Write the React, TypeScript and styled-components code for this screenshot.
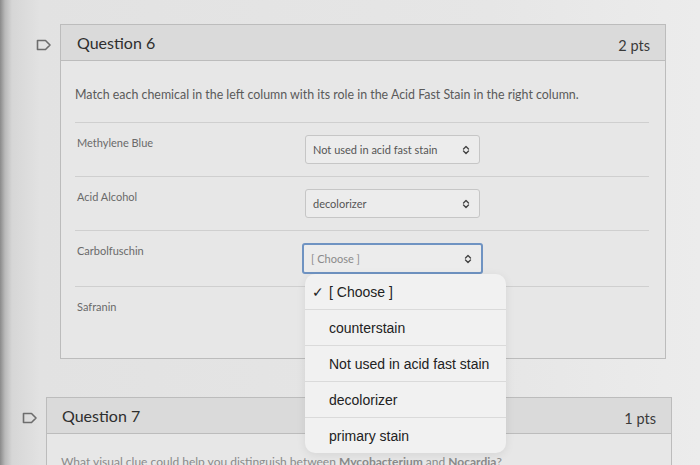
import styled, { createGlobalStyle } from 'styled-components';

const GlobalStyle = createGlobalStyle`
  html, body {
    margin: 0;
    padding: 0;
  }
  body {
    width: 700px;
    height: 465px;
    overflow: hidden;
    font-family: Lato, "Liberation Sans", sans-serif;
    background: linear-gradient(90deg, #8a8a8a 0, #b9b9b9 5px, #d6d6d6 12px, #e2e2e2 40px, #e6e6e6 70%, #ececec 100%);
  }
`;

interface Row {
  chemical: string;
  value: string;
  focused?: boolean;
  empty?: boolean;
}

const rows: Row[] = [
  { chemical: 'Methylene Blue', value: 'Not used in acid fast stain' },
  { chemical: 'Acid Alcohol', value: 'decolorizer' },
  { chemical: 'Carbolfuschin', value: '[ Choose ]', focused: true, empty: true },
  { chemical: 'Safranin', value: '' },
];

const options = ['[ Choose ]', 'counterstain', 'Not used in acid fast stain', 'decolorizer', 'primary stain'];

const Flag = () => (
  <svg width="16" height="12" viewBox="0 0 16 12">
    <path d="M1.5 1.5 H9.5 L14 6 L9.5 10.5 H1.5 Z" fill="none" stroke="#6d6d6d" strokeWidth="1.6" strokeLinejoin="round" />
  </svg>
);

const Arrows = () => (
  <svg width="8" height="10" viewBox="0 0 8 10">
    <path d="M1.5 4 L4 1.5 L6.5 4 M1.5 6 L4 8.5 L6.5 6" fill="none" stroke="#444" strokeWidth="1.4" strokeLinecap="round" strokeLinejoin="round" />
  </svg>
);

const App = () => {
  return (
    <>
      <GlobalStyle />
      <Page>
        <Question $left={36} $right={34}>
          <FlagCol><Flag /></FlagCol>
          <Card>
            <Header>
              <Title>Question 6</Title>
              <Points>2 pts</Points>
            </Header>
            <Body>
              <Prompt>Match each chemical in the left column with its role in the Acid Fast Stain in the right column.</Prompt>
              {rows.map((r, i) => (
                <MatchRow key={r.chemical} $last={i === rows.length - 1}>
                  <Chemical>{r.chemical}</Chemical>
                  <SelectWrap>
                    <Select $focused={r.focused} $empty={r.empty}>
                      <span>{r.value}</span>
                      <Arrows />
                    </Select>
                    {r.focused && (
                      <Menu>
                        {options.map((o, j) => (
                          <MenuItem key={o} $first={j === 0}>
                            {j === 0 && <Check>✓</Check>}
                            {o}
                          </MenuItem>
                        ))}
                      </Menu>
                    )}
                  </SelectWrap>
                </MatchRow>
              ))}
            </Body>
          </Card>
        </Question>

        <Question $left={22} $right={28}>
          <FlagCol><Flag /></FlagCol>
          <Card>
            <Header $small>
              <Title $small>Question 7</Title>
              <Points>1 pts</Points>
            </Header>
            <Body $tight>
              <Prompt $dim>
                What visual clue could help you distinguish between <b>Mycobacterium</b> and <b>Nocardia</b>?
              </Prompt>
            </Body>
          </Card>
        </Question>
      </Page>
    </>
  );
};

const Page = styled.div`
  display: flex;
  flex-direction: column;
  gap: 38px;
  padding-top: 24px;
`;

const Question = styled.section<{ $left: number; $right: number }>`
  display: flex;
  align-items: flex-start;
  padding-left: ${p => p.$left}px;
  padding-right: ${p => p.$right}px;
`;

const FlagCol = styled.div`
  width: 24px;
  padding-top: 11px;
  flex-shrink: 0;
`;

const Card = styled.div`
  flex: 1;
  border: 1px solid #bcbcbc;
  background: #e7e7e7;
`;

const Header = styled.div<{ $small?: boolean }>`
  height: 35px;
  display: flex;
  align-items: center;
  justify-content: space-between;
  padding: 0 15px 0 16px;
  background: #dadada;
  border-bottom: 1px solid #bcbcbc;
`;

const Title = styled.h2<{ $small?: boolean }>`
  margin: 0;
  font-size: 16px;
  font-weight: 400;
  color: #2e2e2e;
  margin-left: ${p => (p.$small ? -1 : 0)}px;
`;

const Points = styled.span`
  font-size: 14.5px;
  color: #3a3a3a;
  margin-top: 6px;
`;

const Body = styled.div<{ $tight?: boolean }>`
  padding: ${p => (p.$tight ? '20px 14px 20px' : '26px 16px 18px 14px')};
`;

const Prompt = styled.p<{ $dim?: boolean }>`
  margin: 0;
  padding-bottom: ${p => (p.$dim ? 0 : 20)}px;
  border-bottom: ${p => (p.$dim ? 'none' : '1px solid #cfcfcf')};
  font-size: ${p => (p.$dim ? 12 : 12.4)}px;
  color: ${p => (p.$dim ? '#8a8a8a' : '#5a5a5a')};
  white-space: nowrap;
`;

const MatchRow = styled.div<{ $last?: boolean }>`
  display: flex;
  align-items: flex-start;
  padding: 12px 0 12px;
  border-bottom: ${p => (p.$last ? 'none' : '1px solid #cfcfcf')};
`;

const Chemical = styled.div`
  width: 228px;
  padding-top: 1px;
  padding-left: 2px;
  font-size: 11px;
  color: #6a6a6a;
`;

const SelectWrap = styled.div`
  position: relative;
`;

const Select = styled.div<{ $focused?: boolean; $empty?: boolean }>`
  box-sizing: border-box;
  width: ${p => (p.$focused ? 181 : 175)}px;
  height: ${p => (p.$focused ? 31 : 29)}px;
  margin-left: ${p => (p.$focused ? -3 : 0)}px;
  display: flex;
  align-items: center;
  justify-content: space-between;
  padding: 0 9px 0 7px;
  background: #ececec;
  border: ${p => (p.$focused ? '2px solid #6f93c2' : '1px solid #c6c6c6')};
  border-radius: 3px;
  font-size: 11px;
  color: ${p => (p.$empty ? '#8a8a8a' : '#555')};
`;

const Menu = styled.div`
  position: absolute;
  left: 0;
  top: 31px;
  width: 201px;
  background: #f1f1f1;
  border-radius: 10px;
  box-shadow: 0 2px 10px rgba(0, 0, 0, 0.08);
  overflow: hidden;
  z-index: 2;
`;

const MenuItem = styled.div<{ $first?: boolean }>`
  height: 35px;
  display: flex;
  align-items: center;
  padding-left: ${p => (p.$first ? 7 : 24)}px;
  border-top: ${p => (p.$first ? 'none' : '1px solid #dadada')};
  font-family: "Liberation Sans", Arial, sans-serif;
  font-size: 14px;
  color: #222;
`;

const Check = styled.span`
  width: 17px;
  font-size: 14px;
`;

export default App;
